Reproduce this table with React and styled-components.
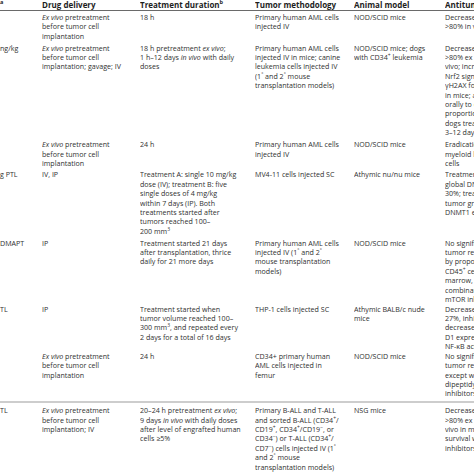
import React from "react";
import styled, { createGlobalStyle } from "styled-components";

const GlobalStyle = createGlobalStyle`
  html, body {
    margin: 0;
    padding: 0;
    background: #ffffff;
  }
  body {
    font-family: "Open Sans", "Noto Sans", sans-serif;
    color: #303030;
  }
`;

const Frame = styled.div`
  width: 474px;
  height: 474px;
  overflow: hidden;
  background: #fff;
`;

const Table = styled.table`
  border-collapse: collapse;
  table-layout: fixed;
  width: 650px;
  font-size: 7.1px;
`;

const Col = styled.col`
  width: ${(p) => p.$w}px;
`;

const HeadCell = styled.th`
  padding: 0;
  height: 9.5px;
  line-height: 9px;
  font-size: 8px;
  font-weight: 700;
  color: #1e1e1e;
  text-align: left;
  vertical-align: top;
  white-space: nowrap;
  overflow: hidden;
  border-bottom: 1px solid #6a6a6a;
`;

const Row = styled.tr`
  ${(p) => p.$split && "border-top: 2px solid #cdcdcd;"}
`;

// pt / pb: spacing above and below a row's text, it varies a little per row
const Cell = styled.td`
  padding: ${(p) => p.$pt}px 0 ${(p) => p.$pb}px 0;
  vertical-align: top;
  white-space: nowrap;
  overflow: hidden;
  line-height: 9.4px;
`;

const Line = styled.span`
  display: block;
`;

const Sup = styled.sup`
  font-size: 0.7em;
  line-height: 0;
  vertical-align: super;
`;

const I = styled.em`
  font-style: italic;
`;

const exVivo = (
  <>
    <I>Ex vivo</I> pretreatment
  </>
);

const rows = [
  {
    pt: 2.3,
    dose: [""],
    drug: [exVivo, "before tumor cell", "implantation"],
    duration: ["18 h"],
    tumor: ["Primary human AML cells", "injected IV"],
    animal: ["NOD/SCID mice"],
    effect: ["Decreased engraftment", ">80% in vivo"],
  },
  {
    pt: 2.5,
    dose: ["ng/kg"],
    drug: [exVivo, "before tumor cell", "implantation; gavage; IV"],
    duration: [
      <>
        18 h pretreatment <I>ex vivo</I>;
      </>,
      <>
        1 h–12 days <I>in vivo</I> with daily
      </>,
      "doses",
    ],
    tumor: [
      "Primary human AML cells",
      "injected IV in mice; canine",
      "leukemia cells injected IV",
      <>
        (1<Sup>°</Sup> and 2<Sup>°</Sup> mouse
      </>,
      "transplantation models)",
    ],
    animal: [
      "NOD/SCID mice; dogs",
      <>
        with CD34<Sup>+</Sup> leukemia
      </>,
    ],
    effect: [
      "Decreased engraftment",
      ">80% ex vivo and in",
      "vivo; increased ROS,",
      "Nrf2 signaling and",
      "γH2AX formation",
      "in mice; administered",
      "orally to dogs, reduced",
      "proportion of blasts in",
      "dogs treated for",
      "3–12 days",
    ],
  },
  {
    pt: 2.7,
    dose: [""],
    drug: [exVivo, "before tumor cell", "implantation"],
    duration: ["24 h"],
    tumor: ["Primary human AML cells", "injected IV"],
    animal: ["NOD/SCID mice"],
    effect: ["Eradication of", "myeloid leukemia stem", "cells"],
  },
  {
    pt: 1.8,
    dose: ["g PTL"],
    drug: ["IV, IP"],
    duration: [
      "Treatment A: single 10 mg/kg",
      "dose (IV); treatment B: five",
      "single doses of 4 mg/kg",
      "within 7 days (IP). Both",
      "treatments started after",
      "tumors reached 100–",
      <>
        200 mm<Sup>3</Sup>
      </>,
    ],
    tumor: ["MV4-11 cells injected SC"],
    animal: ["Athymic nu/nu mice"],
    effect: [
      "Treatment A reduced",
      "global DNA methylation",
      "30%; treatment B reduced",
      "tumor growth and",
      "DNMT1 expression",
    ],
  },
  {
    pt: 2.5,
    dose: ["DMAPT"],
    drug: ["IP"],
    duration: [
      "Treatment started 21 days",
      "after transplantation, thrice",
      "daily for 21 more days",
    ],
    tumor: [
      "Primary human AML cells",
      <>
        injected IV (1<Sup>°</Sup> and 2<Sup>°</Sup>
      </>,
      "mouse transplantation",
      "models)",
    ],
    animal: ["NOD/SCID mice"],
    effect: [
      "No significant",
      "tumor reduction, reduced",
      "by proportion of",
      <>
        CD45<Sup>+</Sup> cells in bone
      </>,
      "marrow, enhanced in",
      "combination with",
      "mTOR inhibitors",
    ],
  },
  {
    pt: 0.2,
    dose: ["TL"],
    drug: ["IP"],
    duration: [
      "Treatment started when",
      "tumor volume reached 100–",
      <>
        300 mm<Sup>3</Sup>, and repeated every
      </>,
      "2 days for a total of 16 days",
    ],
    tumor: ["THP-1 cells injected SC"],
    animal: ["Athymic BALB/c nude", "mice"],
    effect: [
      "Decreased tumor volume",
      "27%, inhibited growth,",
      "decreased cyclin",
      "D1 expression and",
      "NF-κB activity",
    ],
  },
  {
    pt: 0,
    pb: 2.7,
    dose: [""],
    drug: [exVivo, "before tumor cell", "implantation"],
    duration: ["24 h"],
    tumor: ["CD34+ primary human", "AML cells injected in", "femur"],
    animal: ["NOD/SCID mice"],
    effect: [
      "No significant",
      "tumor reduction",
      "except when with",
      "dipeptidyl peptidase",
      "inhibitors",
    ],
  },
  {
    pt: 2.7,
    split: true,
    dose: ["TL"],
    drug: [exVivo, "before tumor cell", "implantation; IV"],
    duration: [
      <>
        20–24 h pretreatment <I>ex vivo</I>;
      </>,
      <>
        9 days <I>in vivo</I> with daily doses
      </>,
      "after level of engrafted human",
      "cells ≥5%",
    ],
    tumor: [
      "Primary B-ALL and T-ALL",
      <>
        and sorted B-ALL (CD34<Sup>+</Sup>/
      </>,
      <>
        CD19<Sup>+</Sup>, CD34<Sup>+</Sup>/CD19<Sup>−</Sup>, or
      </>,
      <>
        CD34<Sup>−</Sup>) or T-ALL (CD34<Sup>+</Sup>/
      </>,
      <>
        CD7<Sup>−</Sup>) cells injected IV (1<Sup>°</Sup>
      </>,
      <>
        and 2<Sup>°</Sup> mouse
      </>,
      "transplantation models)",
    ],
    animal: ["NSG mice"],
    effect: [
      "Decreased engraftment",
      ">80% ex vivo and in",
      "vivo in mice; improved",
      "survival with",
      "inhibitors",
    ],
  },
];

const columns = ["dose", "drug", "duration", "tumor", "animal", "effect"];
const widths = [42, 98, 115, 99, 91, 205];

function Lines({ lines }) {
  return lines.map((l, i) => <Line key={i}>{l === "" ? "\u00a0" : l}</Line>);
}

export default function App() {
  return (
    <Frame>
      <GlobalStyle />
      <Table>
        <colgroup>
          {widths.map((w, i) => (
            <Col key={i} $w={w} />
          ))}
        </colgroup>
        <thead>
          <tr>
            <HeadCell>
              <Sup>a</Sup>
            </HeadCell>
            <HeadCell>Drug delivery</HeadCell>
            <HeadCell>
              Treatment duration<Sup>b</Sup>
            </HeadCell>
            <HeadCell>Tumor methodology</HeadCell>
            <HeadCell>Animal model</HeadCell>
            <HeadCell>Antitumor effect</HeadCell>
          </tr>
        </thead>
        <tbody>
          {rows.map((r, ri) => (
            <Row key={ri} $split={r.split}>
              {columns.map((c) => (
                <Cell key={c} $pt={r.pt} $pb={r.pb || 0}>
                  <Lines lines={r[c]} />
                </Cell>
              ))}
            </Row>
          ))}
        </tbody>
      </Table>
    </Frame>
  );
}
